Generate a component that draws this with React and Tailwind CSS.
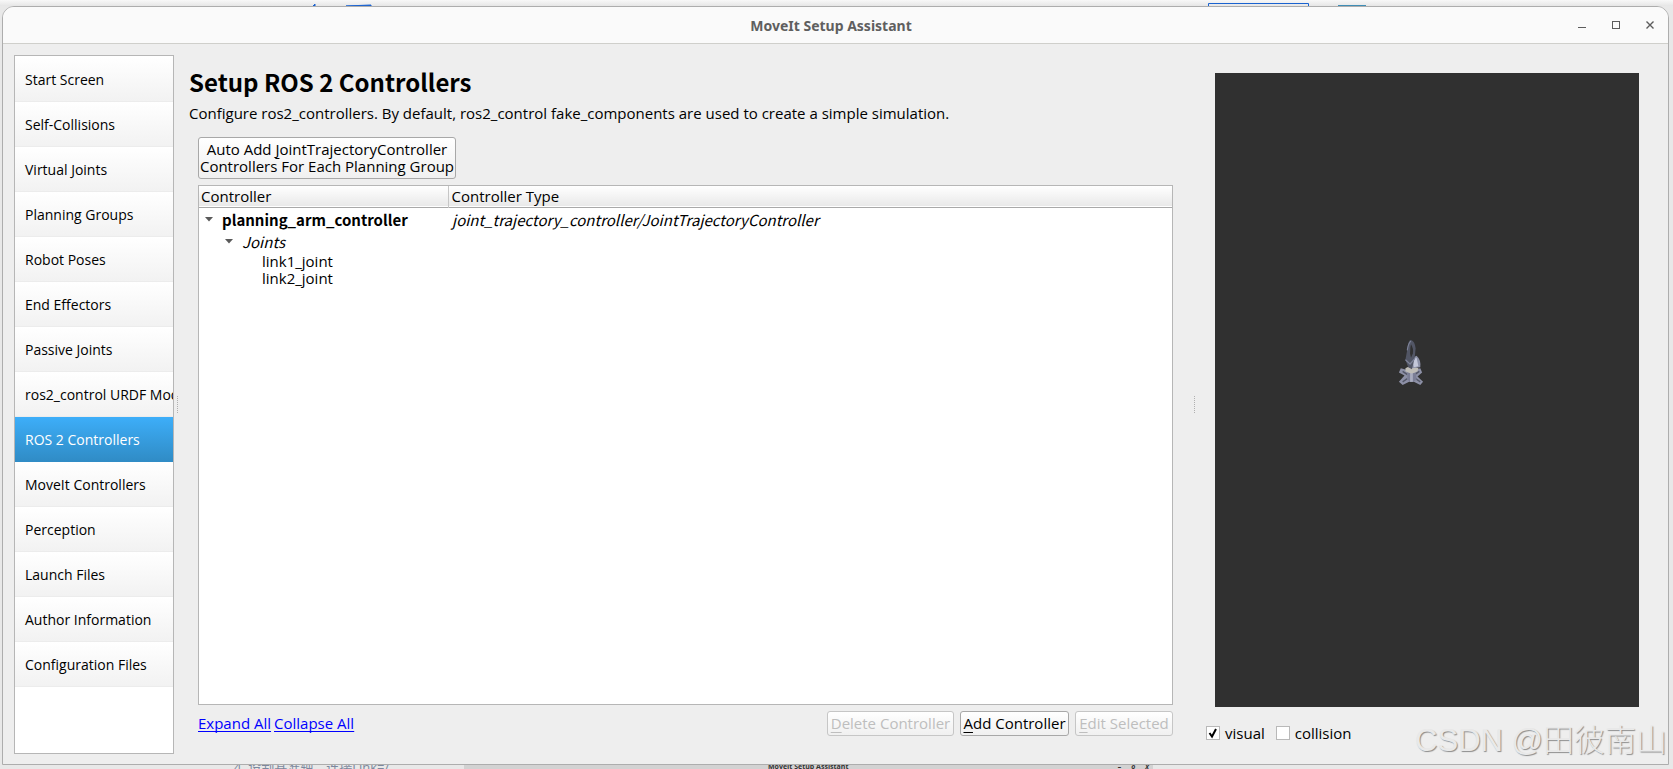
import { useState } from 'react';

const STEPS = [
  'Start Screen',
  'Self-Collisions',
  'Virtual Joints',
  'Planning Groups',
  'Robot Poses',
  'End Effectors',
  'Passive Joints',
  'ros2_control URDF Modifications',
  'ROS 2 Controllers',
  'MoveIt Controllers',
  'Perception',
  'Launch Files',
  'Author Information',
  'Configuration Files',
];

const UI_FONT = 'font-["Open_Sans","Noto_Sans_CJK_SC",sans-serif]';
const ALT_FONT = 'font-["Noto_Sans_CJK_SC",sans-serif]';

function TitleBar() {
  return (
    <header className="flex h-[37px] shrink-0 items-center rounded-t-[11px] border-b border-[#cfcfcb] bg-[#fafafa]">
      <div className="flex-1" />
      <h1 className="font-['Noto_Sans',sans-serif] text-[14px] font-bold text-[#5f5f5f]">MoveIt Setup Assistant</h1>
      <div className="flex flex-1 justify-end gap-4 pr-[9px] text-[#5c5c5c]">
        <button aria-label="Minimize" className="flex size-[18px] items-center justify-center">
          <svg width="8" height="8" shapeRendering="crispEdges"><rect y="6" width="8" height="1" fill="currentColor" /></svg>
        </button>
        <button aria-label="Maximize" className="flex size-[18px] items-center justify-center">
          <svg width="8" height="8"><rect x=".5" y=".5" width="7" height="7" fill="none" stroke="currentColor" /></svg>
        </button>
        <button aria-label="Close" className="flex size-[18px] items-center justify-center">
          <svg width="8" height="8"><path d="M.5.5l7 7M7.5.5l-7 7" stroke="currentColor" strokeWidth="1.4" /></svg>
        </button>
      </div>
    </header>
  );
}

function Sidebar({ active, onSelect }) {
  return (
    <nav className="w-[160px] shrink-0 overflow-hidden border border-[#b6b6b6] bg-white pt-px">
      {STEPS.map((step, i) => (
        <button
          key={step}
          onClick={() => onSelect(i)}
          className={`block h-[45px] w-full overflow-hidden border-b pl-2.5 text-left text-[14px] whitespace-nowrap ${
            i === active
              ? 'border-[#308cc6] bg-linear-to-b from-[#3daef9] to-[#308cc6] text-white'
              : 'border-[#ececec] bg-linear-to-b from-white to-[#f2f2f2] text-black'
          }`}
        >
          {step}
        </button>
      ))}
    </nav>
  );
}

// Dotted grip in the middle of a splitter
function Splitter({ className }) {
  return (
    <div className={`flex shrink-0 items-center justify-center ${className}`}>
      <div className="h-[17px] border-l border-dotted border-[#b0b0b0]" />
    </div>
  );
}

function PushButton({ children, className = '', ...props }) {
  return (
    <button
      className={`rounded-[3px] border border-[#a8a8a8] bg-linear-to-b from-white to-[#f0f0f0] text-black disabled:border-[#c6c6c6] disabled:text-[#bebebe] ${className}`}
      {...props}
    >
      {children}
    </button>
  );
}

function Mnemonic({ children }) {
  return <span className="underline decoration-1 underline-offset-3 [text-decoration-skip-ink:none]">{children}</span>;
}

function Arrow() {
  return <svg width="8" height="5" className="shrink-0"><path d="M0 0h8L4 4.5z" fill="#5a5a5a" /></svg>;
}

function ControllerTree({ expanded }) {
  return (
    <div className="flex-1 border border-[#b6b6b6] bg-white">
      <table className="w-full table-fixed border-collapse text-left">
        <colgroup>
          <col className="w-[249px]" />
          <col />
        </colgroup>
        <thead>
          <tr className="h-[21px] border-b border-[#a9a9a9] bg-linear-to-b from-white to-[#e9e9e9] leading-[20px]">
            <th className="border-r border-[#c6c6c6] pl-[2px] font-normal">Controller</th>
            <th className="pl-[3px] font-normal">Controller Type</th>
          </tr>
        </thead>
        <tbody>
          <tr className={`h-[23px] leading-[23px] ${ALT_FONT}`}>
            <td>
              <div className="flex items-center gap-[9px] pl-[6px] font-bold"><Arrow />planning_arm_controller</div>
            </td>
            <td className="pl-[4px] italic">joint_trajectory_controller/JointTrajectoryController</td>
          </tr>
          {expanded && (
            <>
              <tr className={`h-[22px] leading-[22px] ${ALT_FONT}`}>
                <td>
                  <div className="flex items-center gap-[9px] pl-[26px] italic"><Arrow />Joints</div>
                </td>
                <td />
              </tr>
              <tr className="h-[17px] leading-[17px]"><td className="pl-[63px]">link1_joint</td><td /></tr>
              <tr className="h-[17px] leading-[17px]"><td className="pl-[63px]">link2_joint</td><td /></tr>
            </>
          )}
        </tbody>
      </table>
    </div>
  );
}

function ControllersPane() {
  const [expanded, setExpanded] = useState(true);
  const toggle = (value) => (e) => {
    e.preventDefault();
    setExpanded(value);
  };

  return (
    <main className="flex min-w-0 flex-1 flex-col pt-[10px] pb-[18px]">
      <h2 className={`text-[24px] leading-[36px] font-bold ${ALT_FONT}`}>Setup ROS 2 Controllers</h2>
      <p className="mt-[3px] leading-[20px]">
        Configure ros2_controllers. By default, ros2_control fake_components are used to create a simple simulation.
      </p>
      <div className="mt-[14px] flex flex-1 flex-col pl-[9px]">
        <PushButton className="h-[42px] w-[258px] self-start leading-[17px] whitespace-nowrap">
          Auto Add <Mnemonic>J</Mnemonic>ointTrajectoryController
          <br />
          Controllers For Each Planning Group
        </PushButton>
        <div className="mt-[6px] flex flex-1 flex-col">
          <ControllerTree expanded={expanded} />
        </div>
        <div className="mt-[6px] flex items-center gap-[6px] whitespace-nowrap">
          <div className="flex flex-1 gap-[3px] text-[#0000ff] underline underline-offset-2 [text-decoration-skip-ink:none]">
            <a href="#expand" onClick={toggle(true)}>Expand All</a>
            <a href="#collapse" onClick={toggle(false)}>Collapse All</a>
          </div>
          <PushButton disabled className="h-[25px] w-[127px]"><Mnemonic>D</Mnemonic>elete Controller</PushButton>
          <PushButton className="h-[25px] w-[109px]"><Mnemonic>A</Mnemonic>dd Controller</PushButton>
          <PushButton disabled className="h-[25px] w-[98px]"><Mnemonic>E</Mnemonic>dit Selected</PushButton>
        </div>
      </div>
    </main>
  );
}

function Robot() {
  return (
    <svg width="26" height="46" viewBox="0 2 28 44" preserveAspectRatio="none">
      <path d="M11 31L3 29l-2 4 6 3-6 6 4 3 7-3 5 0 7 3 3-3-6-5 5-4-2-4-8 2z" fill="#8d90a6" />
      <path d="M5 32l5 3M23 32l-5 3M5 42l5-3M24 42l-5-3" stroke="#555869" strokeWidth="1.5" />
      <path d="M10 32h9l1 8q-5 4-10 0z" fill="#7b7e96" />
      <path d="M13 33h3v9h-3z" fill="#a9acbf" />
      <path d="M8 29q6-4 14 0l-1 3q-6 4-13 0z" fill="#bfbdb8" />
      <path d="M14 20l6-3q5 4 4 11l-9 1z" fill="#8d92a8" />
      <path d="M16 21l4-2 2 8-5 1z" fill="#c4c8da" />
      <path d="M8 21l2-10q1-9 4-9 4 1 5 8l-1 9-3 11-4-2z" fill="#525665" />
      <path d="M13 15q0-6 1-9 3 4 2 9l-2 4z" fill="#303030" />
      <path d="M10 12q1-7 4-9M8 21l5 4 5-5" fill="none" stroke="#7d8298" strokeWidth="1.2" />
    </svg>
  );
}

function Check({ label, ...props }) {
  return (
    <label className="flex items-center gap-[5px]">
      <span className="grid size-[14px]">
        <input
          type="checkbox"
          className="peer col-start-1 row-start-1 size-[14px] appearance-none border border-[#b9b9b9] bg-white"
          {...props}
        />
        <svg viewBox="0 0 14 14" className="pointer-events-none invisible col-start-1 row-start-1 peer-checked:visible">
          <path d="M3.5 7l2.5 3.5 4-7.5" fill="none" stroke="#000" strokeWidth="2" />
        </svg>
      </span>
      {label}
    </label>
  );
}

function Preview() {
  return (
    <section className="flex w-[424px] shrink-0 flex-col pt-[29px] pb-[21px]">
      <div className="flex flex-1 items-center justify-center bg-[#303030] pr-8 pb-[54px]">
        <Robot />
      </div>
      <div className="mt-[16px] -ml-[9px] flex items-center gap-[11px] leading-[20px]">
        <Check label="visual" defaultChecked />
        <Check label="collision" />
      </div>
    </section>
  );
}

export default function App() {
  const [active, setActive] = useState(8);

  return (
    <div className={`relative flex h-screen flex-col overflow-hidden bg-[#e8e8e8] pr-1 pl-0.5 text-[15px] text-black ${UI_FONT}`}>
      {/* Strip of the desktop above the window */}
      <div className="-mr-1 -ml-0.5 h-1.5 shrink-0 bg-linear-to-b from-[#f8f8f8] to-[#e6e6e6]">
        <svg className="block h-1.5 w-full">
          <path d="M313 6l2-2v2z" fill="#1a63d0" stroke="#1a63d0" />
          <path d="M346 6l25-1v1z" fill="#1a63d0" stroke="#1a63d0" />
          <path d="M1208.5 6V3.5h100V6" stroke="#1a63d0" fill="none" />
          <path d="M1338 5.5h28" stroke="#3f8db5" />
        </svg>
      </div>
      <div className="flex min-h-0 flex-1 flex-col rounded-t-[12px] border border-[#adadad] bg-[#eeeeee]">
        <TitleBar />
        <div className="flex min-h-0 flex-1 pl-[11px]">
          <div className="flex pt-[11px] pb-[10px]">
            <Sidebar active={active} onSelect={setActive} />
          </div>
          <Splitter className="w-[7px]" />
          <div className="flex min-w-0 flex-1 pt-[10px] pb-[10px] pl-[8px]">
            <ControllersPane />
          </div>
          <Splitter className="w-[42px]" />
          <Preview />
          <div className="w-[29px] shrink-0" />
        </div>
      </div>
      {/* Windows peeking out below */}
      <div className="flex h-1 shrink-0 overflow-hidden leading-[4px] whitespace-nowrap">
        <span className="w-[462px] pl-[232px] text-[13px] text-[#7d889e]">4. 设制基准轴、连接Link=/…</span>
        <div className="flex w-[689px] items-center justify-between bg-[#d2d2d2] pr-1 pl-[304px] text-[7px] font-bold text-[#333]">
          <span>MoveIt Setup Assistant</span>
          <span className="flex gap-2.5"><i>–</i><i>o</i><i>x</i></span>
        </div>
      </div>
      <div className="pointer-events-none absolute right-[6px] bottom-[8px] font-['Liberation_Sans','Noto_Sans_CJK_SC',sans-serif] text-[31px] leading-[40px] font-light text-[#e9e9e9] [text-shadow:1px_1px_1px_#8c8c8c]">
        CSDN @田彼南山
      </div>
    </div>
  );
}
